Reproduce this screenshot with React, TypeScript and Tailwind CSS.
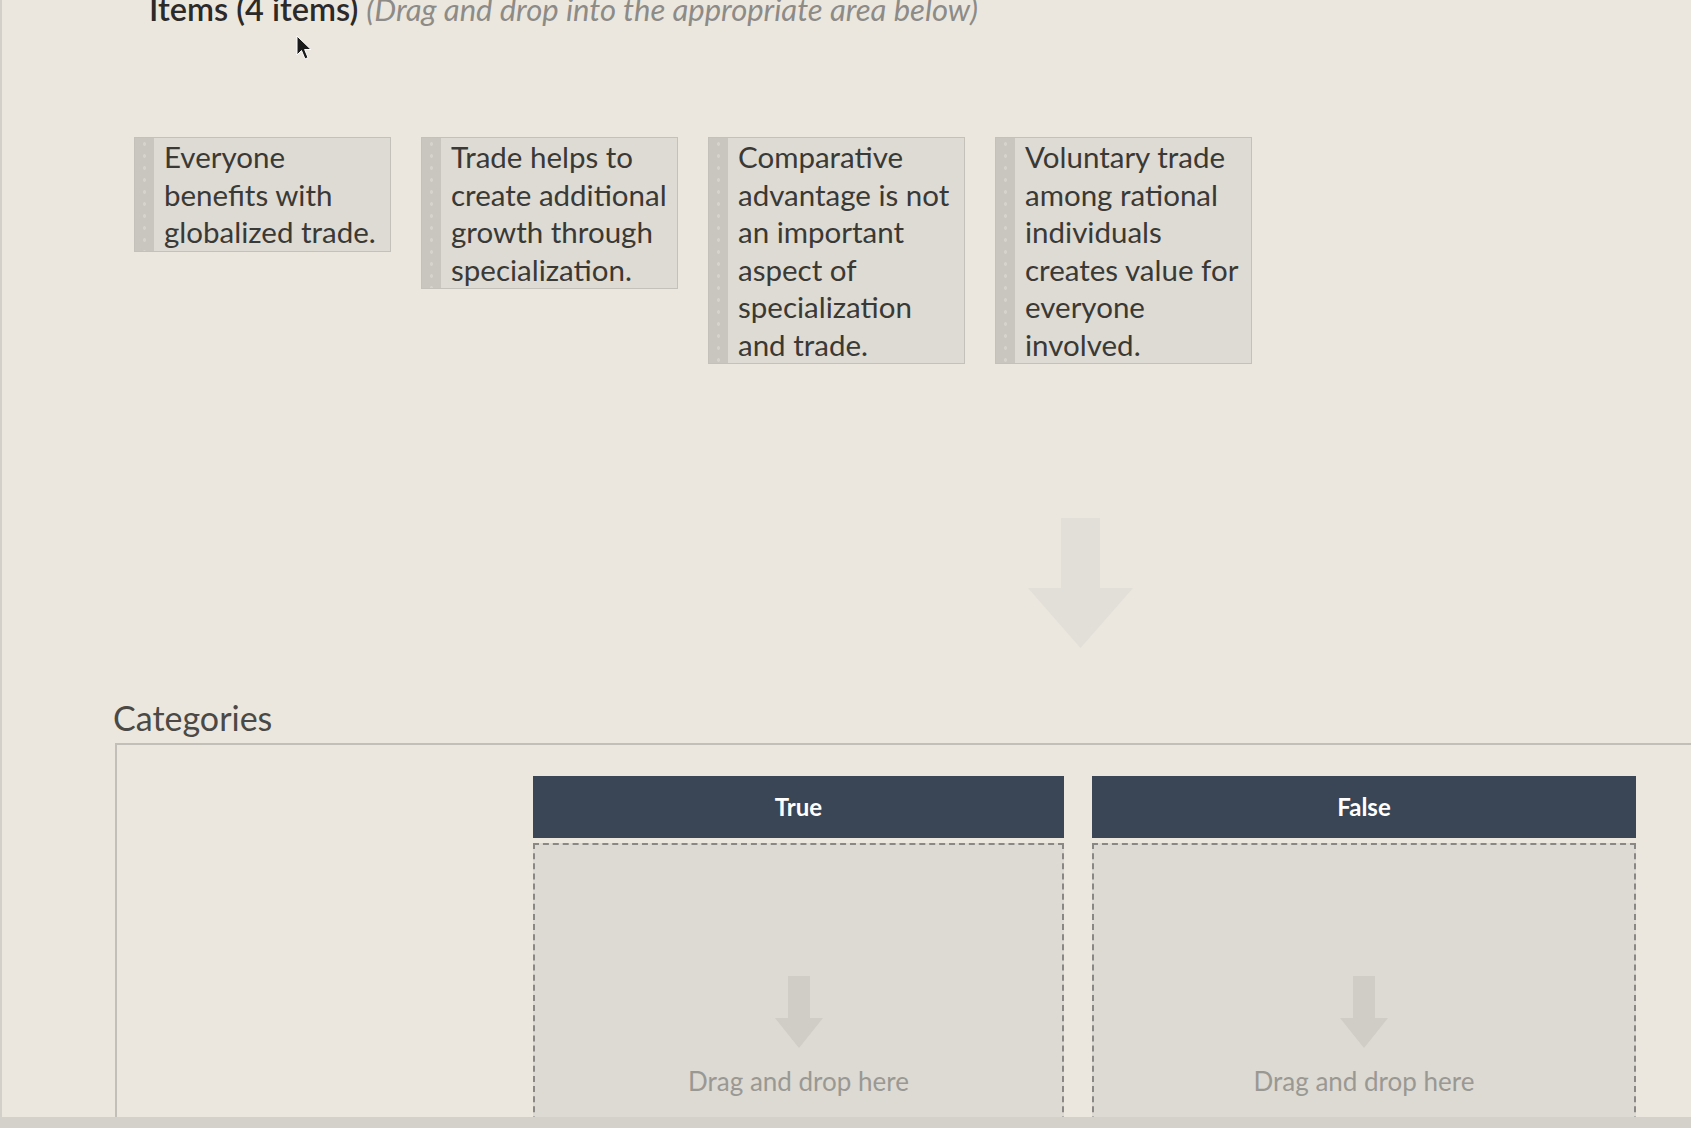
import React from "react";

const items = [
  "Everyone benefits with globalized trade.",
  "Trade helps to create additional growth through specialization.",
  "Comparative advantage is not an important aspect of specialization and trade.",
  "Voluntary trade among rational individuals creates value for everyone involved.",
];

function BigArrow({ className }: { className?: string }) {
  return (
    <svg viewBox="0 0 105 130" className={className} fill="currentColor">
      <polygon points="33,0 72,0 72,70 105,70 52.5,130 0,70 33,70" />
    </svg>
  );
}

function SmallArrow({ className }: { className?: string }) {
  return (
    <svg viewBox="0 0 48 72" className={className} fill="currentColor">
      <polygon points="13,0 35,0 35,42 48,42 24,72 0,42 13,42" />
    </svg>
  );
}

function Card({ text }: { text: string }) {
  return (
    <div className="flex w-[257px] border border-[#c4c1ba] bg-[#dedbd4]">
      <div className="w-[19px] shrink-0 bg-[#c9c6bf] bg-[radial-gradient(circle,#d6d3cc_1.5px,transparent_2px)] bg-[length:19px_12px]" />
      <div className="py-[0px] pl-[10px] pr-[8px] text-[29.5px] leading-[37.5px] text-[#3a3935]">
        {text}
      </div>
    </div>
  );
}

function Bucket({ label, w }: { label: string; w: string }) {
  return (
    <div className={`flex flex-col ${w}`}>
      <div className="flex h-[62px] items-center justify-center bg-[#3a4555] text-[24px] font-bold text-white">
        {label}
      </div>
      <div className="mt-[5px] flex h-[320px] flex-col items-center border-2 border-dashed border-[#8a8884] bg-[#dddad3] pt-[131px]">
        <SmallArrow className="h-[72px] w-[48px] text-[#d0cdc6]" />
        <div className="mt-[14px] text-[26px] text-[#9a9893]">Drag and drop here</div>
      </div>
    </div>
  );
}

export default function App() {
  return (
    <div
      className="relative h-[1128px] w-full overflow-hidden bg-[#ebe7df]"
      style={{ fontFamily: "Lato, 'Open Sans', sans-serif" }}
    >
      <div className="flex h-[1117px] flex-col overflow-hidden border-l-2 border-[#d3d0c9]">
        <div className="-mt-[9px] pl-[147px] text-[31px] leading-[36px] whitespace-nowrap">
          <span className="text-[32.5px] font-semibold text-[#2b2a28]">Items (4 items)</span>{" "}
          <span className="italic text-[#8d8b87]">(Drag and drop into the appropriate area below)</span>
        </div>

        <div className="mt-[110px] flex items-start gap-[30px] pl-[132px]">
          {items.map((t) => (
            <Card key={t} text={t} />
          ))}
        </div>

        <div className="mt-[154px] pl-[1026px]">
          <BigArrow className="h-[130px] w-[105px] text-[#e2dfd8]" />
        </div>

        <div className="mt-[50px] pl-[111px] text-[34px] leading-[40px] text-[#4a4945]">Categories</div>

        <div className="ml-[113px] mt-[5px] flex flex-1 gap-[28px] border-l-2 border-t-2 border-[#c2bfb8] pl-[416px] pt-[31px]">
          <Bucket label="True" w="w-[531px]" />
          <Bucket label="False" w="w-[544px]" />
        </div>
      </div>
      <div className="h-[11px] bg-[#d4d1ca]" />

      <svg
        className="absolute left-[296px] top-[35px] h-[26px] w-[17px]"
        viewBox="0 0 17 26"
      >
        <path d="M1 1 L1 20 L5.5 15.5 L9 24 L12 22.6 L8.6 14.5 L15 14.5 Z" fill="#1a1a1a" stroke="#ffffff" strokeWidth="1" />
      </svg>
    </div>
  );
}
